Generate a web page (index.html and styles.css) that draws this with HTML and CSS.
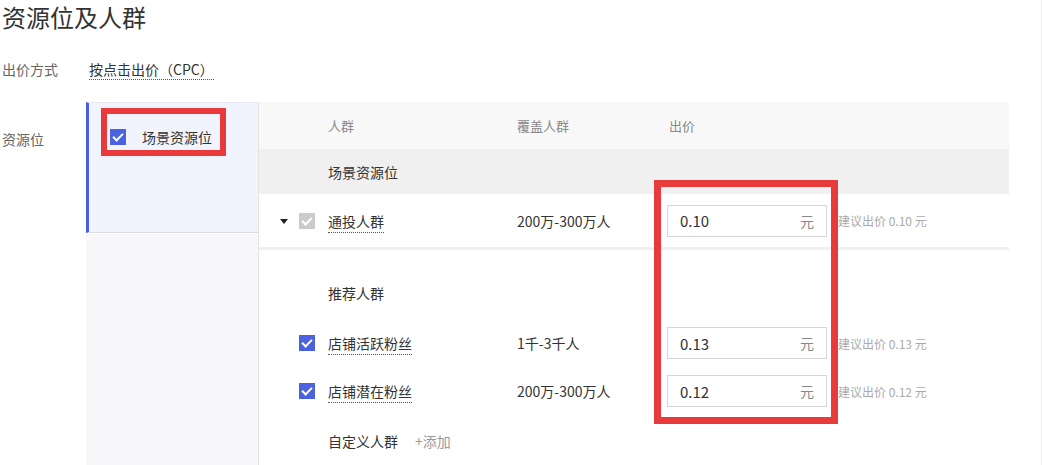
FILE: index.html
```html
<!DOCTYPE html>
<html lang="zh-CN">
<head>
    <meta charset="UTF-8">
    <title>资源位及人群</title>
    <link rel="stylesheet" href="styles.css">
</head>
<body>
<div class="page">
    <h1 class="title">资源位及人群</h1>

    <div class="field">
        <span class="field-label">出价方式</span>
        <span class="dotted">按点击出价（CPC）</span>
    </div>

    <div class="main">
        <div class="main-label">资源位</div>

        <div class="side">
            <div class="side-item">
                <span class="check"></span>
                <span class="side-text">场景资源位</span>
                <div class="mark mark-side"></div>
            </div>
            <div class="side-rest"></div>
        </div>

        <div class="table">
            <div class="row head">
                <div class="lead"></div>
                <div class="c-name">人群</div>
                <div class="c-cover">覆盖人群</div>
                <div class="c-price">出价</div>
            </div>
            <div class="row group">
                <div class="lead"></div>
                <div class="c-name">场景资源位</div>
            </div>
            <div class="row item first">
                <div class="lead"><span class="caret"></span><span class="check disabled"></span></div>
                <div class="c-name"><span class="dotted">通投人群</span></div>
                <div class="c-cover">200万-300万人</div>
                <div class="c-price">
                    <div class="input"><span>0.10</span><span class="unit">元</span></div>
                    <span class="hint">建议出价 0.10 元</span>
                </div>
            </div>
            <div class="divider"></div>
            <div class="subhead">推荐人群</div>
            <div class="row item">
                <div class="lead"><span class="check"></span></div>
                <div class="c-name"><span class="dotted">店铺活跃粉丝</span></div>
                <div class="c-cover">1千-3千人</div>
                <div class="c-price">
                    <div class="input"><span>0.13</span><span class="unit">元</span></div>
                    <span class="hint">建议出价 0.13 元</span>
                </div>
            </div>
            <div class="row item">
                <div class="lead"><span class="check"></span></div>
                <div class="c-name"><span class="dotted">店铺潜在粉丝</span></div>
                <div class="c-cover">200万-300万人</div>
                <div class="c-price">
                    <div class="input"><span>0.12</span><span class="unit">元</span></div>
                    <span class="hint">建议出价 0.12 元</span>
                </div>
            </div>
            <div class="custom">自定义人群<span class="add">+添加</span></div>

            <div class="mark mark-price"></div>
        </div>
    </div>
</div>
</body>
</html>
```

FILE: styles.css
```css
* {
    box-sizing: border-box;
    margin: 0;
    padding: 0;
}
body {
    font-family: "Noto Sans CJK SC", "Noto Sans", sans-serif;
    font-size: 14px;
    color: #333;
    background: #fff;
    overflow: hidden;
}
.page {
    width: 1042px;
    height: 465px;
    border-right: 1px solid #ececec;
    padding-left: 2px;
}
.title {
    font-size: 24px;
    font-weight: normal;
    line-height: 34px;
    color: #333;
}
.field {
    display: flex;
    margin-top: 25px;
    height: 21px;
    line-height: 20px;
}
.field-label {
    width: 87px;
    color: #666;
}
.dotted {
    border-bottom: 1px dotted #555;
    padding-bottom: 1px;
}
.main {
    display: flex;
    margin-top: 22px;
    height: 363px;
}
.main-label {
    width: 84px;
    padding-top: 27px;
    line-height: 20px;
    color: #666;
}
.side {
    width: 173px;
    display: flex;
    flex-direction: column;
    border-right: 1px solid #e3e3e3;
}
.side-item {
    position: relative;
    height: 131px;
    background: #f1f4fd;
    border-left: 3px solid #4a5fdc;
    border-bottom: 1px solid #dcdde3;
    border-top: 1px solid #e8eaf2;
    display: flex;
    align-items: flex-start;
    padding: 26px 0 0 21px;
}
.side-item .side-text {
    margin-left: 16px;
    line-height: 20px;
    margin-top: -2px;
}
.side-rest {
    flex: 1;
    background: #f7f7f9;
    margin-top: 1px;
}
.check {
    display: inline-block;
    width: 16px;
    height: 16px;
    background: #4b62e0;
    position: relative;
    flex: none;
}
.check::after {
    content: "";
    position: absolute;
    left: 5px;
    top: 2px;
    width: 4px;
    height: 8px;
    border: solid #fff;
    border-width: 0 2px 2px 0;
    transform: rotate(45deg);
}
.check.disabled {
    background: #cbcbcb;
}
.table {
    position: relative;
    width: 750px;
}
.row {
    display: flex;
    align-items: center;
}
.lead {
    width: 69px;
    display: flex;
    align-items: center;
    padding-left: 40px;
    position: relative;
}
.c-name {
    width: 189px;
}
.c-cover {
    width: 150px;
}
.c-price {
    display: flex;
    align-items: center;
}
.head {
    height: 47px;
    background: #f8f8f8;
    color: #888;
    font-size: 13px;
}
.head .c-price {
    padding-left: 2px;
}
.group {
    height: 45px;
    background: #f0f0f0;
}
.item {
    height: 48px;
}
.item.first {
    height: 53px;
}
.caret {
    position: absolute;
    left: 21px;
    top: 50%;
    margin-top: -2px;
    border-left: 4px solid transparent;
    border-right: 4px solid transparent;
    border-top: 5px solid #222;
}
.input {
    width: 160px;
    height: 32px;
    border: 1px solid #d6d6d6;
    display: flex;
    align-items: center;
    justify-content: space-between;
    padding: 0 12px 0 12px;
    font-size: 15px;
    color: #333;
}
.input .unit {
    color: #888;
    font-size: 14px;
}
.hint {
    margin-left: 11px;
    font-size: 12px;
    color: #aaa;
}
.divider {
    height: 3px;
    background: #f0f0f0;
}
.subhead {
    padding: 33px 0 16px 69px;
    line-height: 20px;
}
.custom {
    padding: 16px 0 0 69px;
    line-height: 20px;
}
.add {
    color: #999;
    margin-left: 17px;
}
.mark {
    position: absolute;
    border: 6px solid #e83a3a;
    pointer-events: none;
}
.mark-side {
    left: 12px;
    top: 5px;
    width: 125px;
    height: 48px;
}
.mark-price {
    left: 395px;
    top: 78px;
    width: 184px;
    height: 244px;
    border-width: 7px;
}
```
